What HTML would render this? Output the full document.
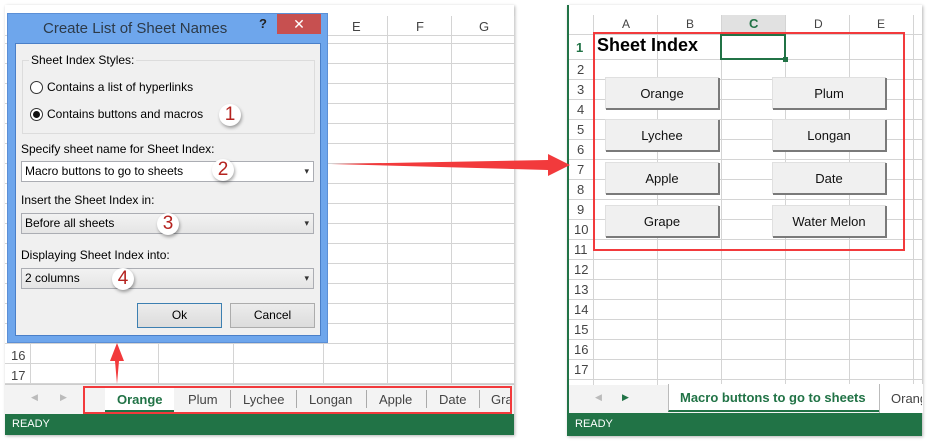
<!DOCTYPE html><html><head><style>
body{margin:0;width:930px;height:444px;background:#fff;position:relative;overflow:hidden;font-family:"Liberation Sans",sans-serif}
.a{position:absolute}
.hl{position:absolute;height:1px;background:#d4d4d4}
.vl{position:absolute;width:1px;background:#d4d4d4}
.t{position:absolute;font-size:12px;color:#222}
.btn{position:absolute;width:114px;height:32px;background:#f0f0f0;border-right:2px solid #7a7a7a;border-bottom:2px solid #7a7a7a;box-sizing:border-box;font-size:13px;color:#111;display:flex;align-items:center;justify-content:center;box-shadow:-1px -1px 0 #e0e0e0}
.num{position:absolute;width:22px;height:22px;border-radius:50%;background:#fff;box-shadow:1px 2px 3px rgba(0,0,0,.35);color:#b5231f;font-size:19px;text-align:center;line-height:22px}
.sel{position:absolute;left:21px;width:293px;height:21px;border:1px solid #abadb3;box-sizing:border-box;font-size:12px;padding-left:3px;line-height:19px;color:#000}
.dd{position:absolute;right:4px;top:0;font-size:9px;color:#333}
</style></head><body>
<div class="a" style="left:5px;top:5px;width:509px;height:430px;background:#fff;box-shadow:1px 1px 3px rgba(0,0,0,.3)"></div>
<div class="hl" style="left:5px;top:35px;width:509px"></div>
<div id="lg"></div>
<div class="t" style="left:352px;top:19px;font-size:13px;color:#444">E</div>
<div class="t" style="left:416px;top:19px;font-size:13px;color:#444">F</div>
<div class="t" style="left:479px;top:19px;font-size:13px;color:#444">G</div>
<div class="t" style="left:11px;top:348px;font-size:13px;color:#444">16</div>
<div class="t" style="left:11px;top:368px;font-size:13px;color:#444">17</div>
<div class="a" style="left:5px;top:384px;width:509px;height:30px;background:#f3f3f3;border-top:1px solid #ccc"></div>
<div class="t" style="left:31px;top:392px;color:#bbb;font-size:9px">◀</div>
<div class="t" style="left:60px;top:392px;color:#bbb;font-size:9px">▶</div>
<div class="a" style="left:105px;top:386px;width:69px;height:24px;background:#fff;border-bottom:2px solid #217346"></div>
<div class="t" style="left:117px;top:392px;font-size:13px;font-weight:bold;color:#217346">Orange</div>
<div class="t" style="left:188px;top:392px;font-size:13px;color:#444">Plum</div>
<div class="vl" style="left:230px;top:390px;height:18px;background:#aaa"></div>
<div class="t" style="left:243px;top:392px;font-size:13px;color:#444">Lychee</div>
<div class="vl" style="left:296px;top:390px;height:18px;background:#aaa"></div>
<div class="t" style="left:309px;top:392px;font-size:13px;color:#444">Longan</div>
<div class="vl" style="left:366px;top:390px;height:18px;background:#aaa"></div>
<div class="t" style="left:379px;top:392px;font-size:13px;color:#444">Apple</div>
<div class="vl" style="left:426px;top:390px;height:18px;background:#aaa"></div>
<div class="t" style="left:439px;top:392px;font-size:13px;color:#444">Date</div>
<div class="vl" style="left:479px;top:390px;height:18px;background:#aaa"></div>
<div class="a" style="left:491px;top:392px;font-size:13px;color:#444;width:21px;overflow:hidden">Grape</div>
<div class="a" style="left:83px;top:386px;width:429px;height:28px;border:2px solid #f23a3c;box-sizing:border-box"></div>
<div class="a" style="left:5px;top:414px;width:509px;height:21px;background:#217346"></div>
<div class="t" style="left:12px;top:418px;color:#fff;font-size:11px">READY</div>

<div class="a" style="left:7px;top:13px;width:321px;height:330px;background:#6ea6ec;border:1px solid #5b8fd6;box-sizing:border-box"></div>
<div class="t" style="left:43px;top:20px;font-size:15px;color:#2d3a48">Create List of Sheet Names</div>
<div class="t" style="left:259px;top:16px;font-size:13px;font-weight:bold;color:#222">?</div>
<div class="a" style="left:277px;top:14px;width:44px;height:20px;background:#c75050;color:#fff;text-align:center;font-size:14px;line-height:20px">✕</div>
<div class="a" style="left:15px;top:43px;width:306px;height:293px;background:#f0f0f0;border:1px solid #4a7fc8;box-sizing:border-box"></div>
<div class="a" style="left:22px;top:60px;width:293px;height:74px;border:1px solid #dcdcdc;box-sizing:border-box"></div>
<div class="t" style="left:29px;top:53px;background:#f0f0f0;padding:0 2px;color:#000">Sheet Index Styles:</div>
<div class="a" style="left:30px;top:81px;width:11px;height:11px;border:1px solid #333;border-radius:50%;background:#fff"></div>
<div class="t" style="left:47px;top:80px;color:#000">Contains a list of hyperlinks</div>
<div class="a" style="left:30px;top:108px;width:11px;height:11px;border:1px solid #333;border-radius:50%;background:#fff"></div>
<div class="a" style="left:33px;top:111px;width:7px;height:7px;border-radius:50%;background:#111"></div>
<div class="t" style="left:47px;top:107px;color:#000">Contains buttons and macros</div>
<div class="num" style="left:219px;top:104px">1</div>
<div class="t" style="left:21px;top:142px;color:#000">Specify sheet name for Sheet Index:</div>
<div class="sel" style="top:161px;background:#fff">Macro buttons to go to sheets<span class="dd">▾</span></div>
<div class="num" style="left:212px;top:159px">2</div>
<div class="t" style="left:21px;top:193px;color:#000">Insert the Sheet Index in:</div>
<div class="sel" style="top:213px;background:linear-gradient(#f2f2f2,#e5e5e5)">Before all sheets<span class="dd">▾</span></div>
<div class="num" style="left:157px;top:213px">3</div>
<div class="t" style="left:21px;top:248px;color:#000">Displaying Sheet Index into:</div>
<div class="sel" style="top:268px;background:linear-gradient(#f2f2f2,#e5e5e5)">2 columns<span class="dd">▾</span></div>
<div class="num" style="left:112px;top:268px">4</div>
<div class="a" style="left:137px;top:303px;width:85px;height:25px;border:1px solid #3c7fb1;background:linear-gradient(#ececec,#dcdcdc);box-sizing:border-box;text-align:center;line-height:23px;font-size:12px">Ok</div>
<div class="a" style="left:230px;top:303px;width:85px;height:25px;border:1px solid #acacac;background:linear-gradient(#ececec,#dcdcdc);box-sizing:border-box;text-align:center;line-height:23px;font-size:12px">Cancel</div>

<div class="a" style="left:567px;top:5px;width:355px;height:431px;background:#fff;box-shadow:1px 1px 3px rgba(0,0,0,.3)"></div>
<div class="a" style="left:567px;top:5px;width:2px;height:431px;background:#217346"></div>
<div class="a" style="left:721px;top:15px;width:64px;height:19px;background:#e1e1e1"></div>
<div id="rg"></div>
<div class="t" style="left:622px;top:17px;color:#444">A</div>
<div class="t" style="left:686px;top:17px;color:#444">B</div>
<div class="t" style="left:749px;top:16px;color:#217346;font-weight:bold;font-size:13px">C</div>
<div class="t" style="left:814px;top:17px;color:#444">D</div>
<div class="t" style="left:877px;top:17px;color:#444">E</div>
<div class="t" style="left:576px;top:40px;color:#217346;font-weight:bold;font-size:13px">1</div>
<div id="rn"></div>
<div class="a" style="left:597px;top:35px;font-size:18px;font-weight:bold;color:#000">Sheet Index</div>
<div class="a" style="left:720px;top:34px;width:66px;height:26px;border:2px solid #217346;box-sizing:border-box"></div>
<div class="a" style="left:783px;top:57px;width:5px;height:5px;background:#217346"></div>
<div class="btn" style="left:606px;top:78px">Orange</div>
<div class="btn" style="left:773px;top:78px">Plum</div>
<div class="btn" style="left:606px;top:120px">Lychee</div>
<div class="btn" style="left:773px;top:120px">Longan</div>
<div class="btn" style="left:606px;top:163px">Apple</div>
<div class="btn" style="left:773px;top:163px">Date</div>
<div class="btn" style="left:606px;top:206px">Grape</div>
<div class="btn" style="left:773px;top:206px">Water Melon</div>
<div class="a" style="left:593px;top:32px;width:312px;height:219px;border:2px solid #f23a3c;box-sizing:border-box"></div>
<div class="a" style="left:569px;top:385px;width:353px;height:28px;background:#f3f3f3"></div>
<div class="t" style="left:595px;top:392px;color:#bbb;font-size:9px">◀</div>
<div class="t" style="left:622px;top:392px;color:#217346;font-size:9px">▶</div>
<div class="a" style="left:668px;top:384px;width:211px;height:26px;background:#fff;border-left:1px solid #bbb;border-bottom:2px solid #217346"></div>
<div class="t" style="left:680px;top:390px;font-size:13px;font-weight:bold;color:#217346">Macro buttons to go to sheets</div>
<div class="a" style="left:879px;top:384px;width:43px;height:29px;border-left:1px solid #bbb;background:#fff"></div>
<div class="a" style="left:891px;top:391px;font-size:13px;color:#444;width:31px;overflow:hidden;white-space:nowrap">Orange</div>
<div class="a" style="left:569px;top:413px;width:353px;height:23px;background:#217346"></div>
<div class="t" style="left:575px;top:418px;color:#fff;font-size:11px">READY</div>

<svg class="a" style="left:0;top:0" width="930" height="444">
<polygon points="331,164 548,160 548,154 570,165 548,176 548,170" fill="#f23a3c"/>
<polygon points="117,343 110,361 115,361 117,384 119,361 124,361" fill="#f23a3c"/>
</svg>
<script>
var lg=document.getElementById('lg'),h='';
[30,95,158,233,323,387,451,514].forEach(function(x){h+='<div class="vl" style="left:'+x+'px;top:16px;height:368px"></div>'});
for(var y=43;y<=383;y+=20)h+='<div class="hl" style="left:5px;top:'+y+'px;width:509px"></div>';
lg.innerHTML=h;
var rg=document.getElementById('rg');h='';
[593,657,721,785,849,913].forEach(function(x){h+='<div class="vl" style="left:'+x+'px;top:15px;height:370px"></div>'});
h+='<div class="hl" style="left:569px;top:34px;width:353px"></div>';
for(var y=59;y<=379;y+=20)h+='<div class="hl" style="left:569px;top:'+y+'px;width:353px"></div>';
rg.innerHTML=h;
var rn=document.getElementById('rn');h='';
for(var i=2;i<=17;i++){var y=59+(i-2)*20+3;h+='<div class="t" style="left:'+(i<10?577:574)+'px;top:'+y+'px;color:#444;font-size:13px">'+i+'</div>';}
rn.innerHTML=h;
</script>
</body></html>
